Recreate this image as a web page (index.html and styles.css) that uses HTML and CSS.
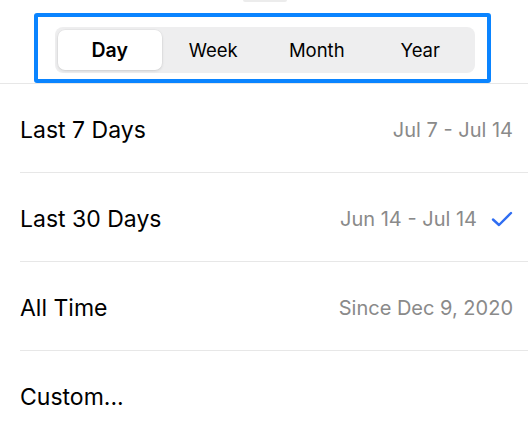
FILE: index.html
```html
<!DOCTYPE html>
<html>
<head>
<meta charset="utf-8">
<link rel="stylesheet" href="styles.css">
</head>
<body>
<div class="sheet">
  <header class="header">
    <div class="grabber"></div>
    <div class="highlight">
      <div class="segmented">
        <div class="seg seg-active">Day</div>
        <div class="seg">Week</div>
        <div class="seg">Month</div>
        <div class="seg">Year</div>
      </div>
    </div>
  </header>
  <ul class="list">
    <li class="row"><span class="label">Last 7 Days</span><span class="detail">Jul 7 - Jul 14</span></li>
    <li class="row"><span class="label">Last 30 Days</span><span class="detail">Jun 14 - Jul 14</span>
      <svg class="check" viewBox="0 0 22 16" width="22" height="16"><path d="M2 8.5 L8 14 L20 2" fill="none" stroke="#2f6df2" stroke-width="2.4" stroke-linecap="round" stroke-linejoin="round"/></svg>
    </li>
    <li class="row"><span class="label">All Time</span><span class="detail">Since Dec 9, 2020</span></li>
    <li class="row"><span class="label">Custom...</span></li>
  </ul>
</div>
</body>
</html>
```

FILE: styles.css
```css
html, body {
  margin: 0;
  padding: 0;
  background: #ffffff;
}
body {
  font-family: Inter, "Noto Sans", sans-serif;
  color: #000;
  width: 528px;
  height: 431px;
  overflow: hidden;
}
.sheet {
  display: flex;
  flex-direction: column;
}
.header {
  height: 83px;
  border-bottom: 1px solid #e7e7e7;
  display: flex;
  flex-direction: column;
  box-sizing: content-box;
}
.grabber {
  width: 44px;
  height: 2px;
  margin: 0 0 0 243px;
  background: #ececec;
  border-radius: 0 0 2px 2px;
}
.highlight {
  position: relative;
  z-index: 1;
  box-sizing: border-box;
  margin: 11px 0 0 34px;
  width: 457px;
  height: 73px;
  border: 4px solid #0a84ff;
  border-radius: 3px;
  padding: 10px 0 0 17px;
  display: flex;
  align-items: flex-start;
}
.segmented {
  box-sizing: border-box;
  width: 420px;
  height: 46px;
  background: #eeeeef;
  border-radius: 8px;
  padding: 3px;
  display: grid;
  grid-template-columns: repeat(4, 1fr);
}
.seg {
  display: flex;
  align-items: center;
  justify-content: center;
  font-size: 18.5px;
  font-weight: 400;
  color: #000;
  border-radius: 7px;
}
.seg-active {
  background: #fff;
  font-weight: 600;
  font-size: 19.5px;
  box-shadow: 0 1px 3px rgba(0,0,0,0.12), 0 0 0 0.5px rgba(0,0,0,0.04);
}
.list {
  list-style: none;
  margin: 0;
  padding: 0;
}
.row {
  margin-left: 20px;
  border-bottom: 1px solid #e7e7e7;
  display: flex;
  align-items: center;
  padding: 3px 15px 0 0;
  box-sizing: border-box;
  height: 89px;
}
.label {
  font-size: 23px;
  font-weight: 400;
  flex: 1;
}
.detail {
  font-size: 20px;
  color: #8a8a8a;
}
.check {
  margin-left: 14px;
  flex: none;
}
```
